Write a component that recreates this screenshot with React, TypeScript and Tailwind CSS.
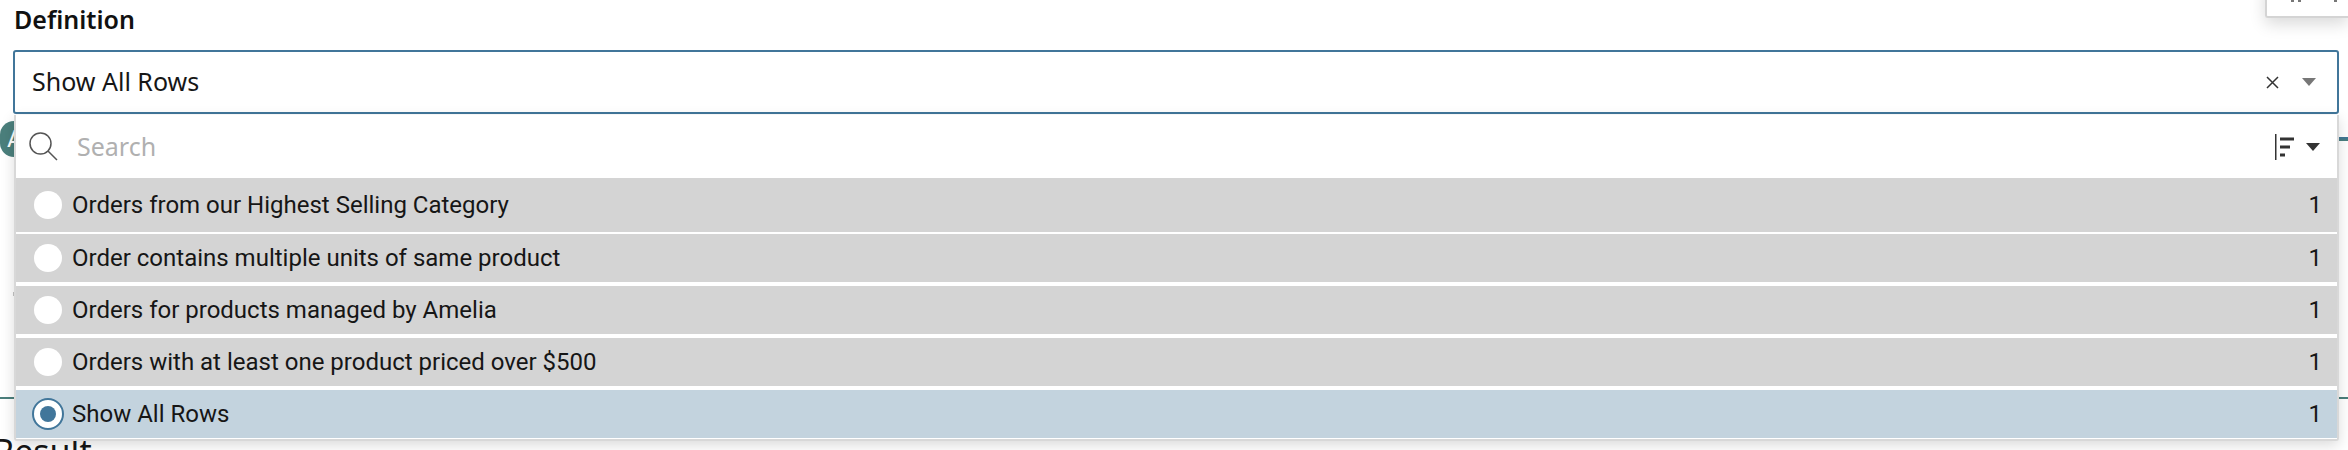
import React from "react";

const rows = [
  "Order contains multiple units of same product",
  "Orders for products managed by Amelia",
  "Orders with at least one product priced over $500",
];

function Row({ label, className, selected }: { label: string; className: string; selected?: boolean }) {
  return (
    <div className={"flex items-center justify-between pl-[16px] pr-[15px] text-[24px] text-[#161616] " + className}>
      <div className="flex items-center gap-[8px]">
        {selected ? (
          <span className="flex h-[32px] w-[32px] items-center justify-center rounded-full border-2 border-[#41769a] bg-white">
            <span className="h-[16px] w-[16px] rounded-full bg-[#41769a]" />
          </span>
        ) : (
          <span className="mx-[2px] h-[28px] w-[28px] rounded-full bg-white" />
        )}
        <span>{label}</span>
      </div>
      <span>1</span>
    </div>
  );
}

export default function App() {
  return (
    <div className="relative h-[450px] w-[2348px] overflow-hidden bg-white font-['Roboto',sans-serif]">
      {/* page behind the menu */}
      <div className="absolute left-0 right-0 top-[137px] h-[4px] bg-gradient-to-b from-[#41769a] to-[#4b7f7c]" />
      <div className="absolute left-0 right-0 top-[397px] h-[2px] bg-[#4b7f7c]" />
      <div className="absolute left-0 top-[121px] flex h-[36px] w-[60px] items-center rounded-l-[14px] bg-[#4b7f7c] pl-[7px] text-[24px] text-white">A</div>
      <div className="absolute left-[13px] top-[292px] h-[4px] w-[2px] bg-[#c4c4c4]" />
      <div className="absolute left-[-7px] top-[426px] font-['Noto_Sans',sans-serif] text-[34px] text-[#161616]">Result</div>
      <div className="absolute right-0 top-[-20px] h-[38px] w-[83px] rounded-bl-[3px] border-b-2 border-l-2 border-[#d4d4d4] bg-white shadow-[0_6px_16px_rgba(0,0,0,0.15)]">
        <div className="absolute left-[24px] top-[20px] h-[2px] w-[3px] bg-[#777]" />
        <div className="absolute left-[31px] top-[20px] h-[2px] w-[3px] bg-[#777]" />
        <div className="absolute left-[67px] top-[20px] h-[2px] w-[3px] bg-[#777]" />
      </div>

      {/* filter */}
      <div className="relative pl-[13px] pr-[9px]">
        <div className="h-[50px] pl-px pt-[2px] font-['Noto_Sans',sans-serif] text-[25px] font-semibold leading-[34px] text-[#111]">Definition</div>
        <div className="flex h-[64px] items-center justify-between rounded-[3px] border-2 border-[#41769a] bg-white pl-[17px] pr-[21px] font-['Noto_Sans',sans-serif] text-[25px] text-[#161616]">
          <span>Show All Rows</span>
          <div className="flex items-center gap-[23px]">
            <svg width="13" height="13" viewBox="0 0 13 13" className="stroke-[#333]" strokeWidth="1.5"><path d="M1 1l11 11M12 1L1 12" /></svg>
            <svg width="14" height="8" viewBox="0 0 14 8"><path d="M0 0h14L7 8z" fill="#777" /></svg>
          </div>
        </div>
        {/* menu */}
        <div className="ml-[1px] mt-[1px] h-[326px] rounded-b-[3px] border-x-2 border-b-2 border-[#d8d8d8] bg-white shadow-[0_4px_14px_rgba(0,0,0,0.15)]">
          <div className="flex h-[63px] items-center justify-between pl-[13px] pr-[17px]">
            <div className="flex items-center gap-[19px]">
              <svg width="29" height="29" viewBox="0 0 29 29" fill="none" stroke="#555" strokeWidth="1.5"><circle cx="11.5" cy="11.5" r="10.5" /><path d="M19 19l9 9" /></svg>
              <span className="font-['Noto_Sans',sans-serif] text-[25px] text-[#b0b0b0]">Search</span>
            </div>
            <div className="flex items-center gap-[11px]">
              <svg width="20" height="26" viewBox="0 0 20 26" fill="#333"><rect x="0" y="0" width="1.5" height="26" /><rect x="5" y="3.5" width="14" height="3" /><rect x="5" y="11.5" width="10" height="3" /><rect x="5" y="19.5" width="5" height="3" /></svg>
              <svg width="14" height="8" viewBox="0 0 14 8"><path d="M0 0h14L7 8z" fill="#333" /></svg>
            </div>
          </div>
          <Row label="Orders from our Highest Selling Category" className="h-[54px] bg-[#d4d4d4]" />
          {rows.map((r, i) => (
            <Row key={r} label={r} className={i === 0 ? "mt-[2px] h-[48px] bg-[#d4d4d4] pb-px" : "mt-[4px] h-[48px] bg-[#d4d4d4] pb-px"} />
          ))}
          <Row label="Show All Rows" className="mt-[4px] h-[48px] bg-[#c3d3de] pb-px" selected />
        </div>
      </div>
    </div>
  );
}
